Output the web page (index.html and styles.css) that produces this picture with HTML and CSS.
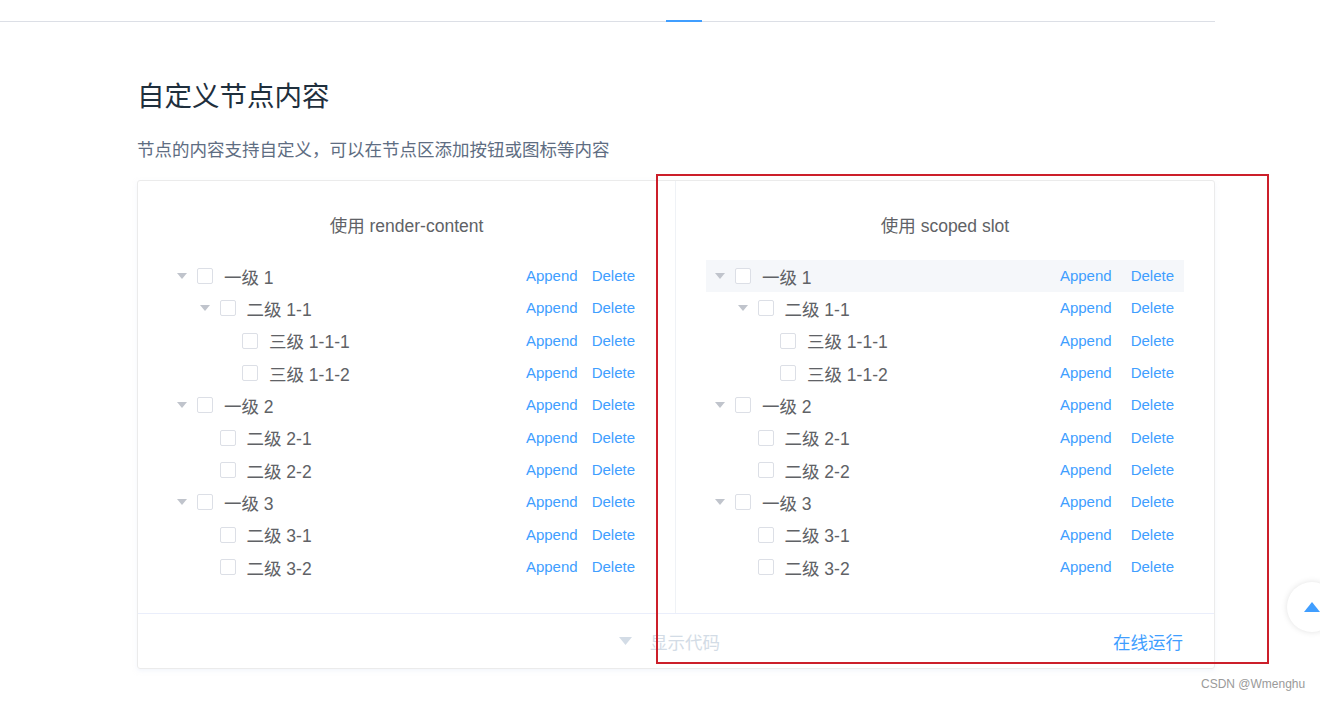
FILE: index.html
```html
<!DOCTYPE html>
<html lang="zh-CN">

<head>
    <meta charset="UTF-8">
    <meta name="viewport" content="width=device-width, initial-scale=1.0">
    <title>Tree 树形控件 - 自定义节点内容</title>
    <link rel="stylesheet" href="styles.css">
</head>

<body>
    <div class="page">
        <nav class="tabs">
            <span class="tab-bar"></span>
        </nav>

        <section class="doc">
            <h3 class="doc-title">自定义节点内容</h3>
            <p class="doc-desc">节点的内容支持自定义，可以在节点区添加按钮或图标等内容</p>

            <div class="demo-block">
                <div class="source">
                    <div class="block">
                        <span class="demonstration">使用 render-content</span>
                        <div class="tree">
                            <div class="node lv1"><span class="caret"><svg width="10" height="6" viewBox="0 0 10 6"><path d="M0 0h10L5 6z"/></svg></span><span class="check"></span><span class="label">一级 1</span><span class="ops"><a>Append</a><a>Delete</a></span></div>
                            <div class="node lv2"><span class="caret"><svg width="10" height="6" viewBox="0 0 10 6"><path d="M0 0h10L5 6z"/></svg></span><span class="check"></span><span class="label">二级 1-1</span><span class="ops"><a>Append</a><a>Delete</a></span></div>
                            <div class="node lv3"><span class="caret leaf"></span><span class="check"></span><span class="label">三级 1-1-1</span><span class="ops"><a>Append</a><a>Delete</a></span></div>
                            <div class="node lv3"><span class="caret leaf"></span><span class="check"></span><span class="label">三级 1-1-2</span><span class="ops"><a>Append</a><a>Delete</a></span></div>
                            <div class="node lv1"><span class="caret"><svg width="10" height="6" viewBox="0 0 10 6"><path d="M0 0h10L5 6z"/></svg></span><span class="check"></span><span class="label">一级 2</span><span class="ops"><a>Append</a><a>Delete</a></span></div>
                            <div class="node lv2"><span class="caret leaf"></span><span class="check"></span><span class="label">二级 2-1</span><span class="ops"><a>Append</a><a>Delete</a></span></div>
                            <div class="node lv2"><span class="caret leaf"></span><span class="check"></span><span class="label">二级 2-2</span><span class="ops"><a>Append</a><a>Delete</a></span></div>
                            <div class="node lv1"><span class="caret"><svg width="10" height="6" viewBox="0 0 10 6"><path d="M0 0h10L5 6z"/></svg></span><span class="check"></span><span class="label">一级 3</span><span class="ops"><a>Append</a><a>Delete</a></span></div>
                            <div class="node lv2"><span class="caret leaf"></span><span class="check"></span><span class="label">二级 3-1</span><span class="ops"><a>Append</a><a>Delete</a></span></div>
                            <div class="node lv2"><span class="caret leaf"></span><span class="check"></span><span class="label">二级 3-2</span><span class="ops"><a>Append</a><a>Delete</a></span></div>
                        </div>
                    </div>

                    <div class="block slot">
                        <span class="demonstration">使用 scoped slot</span>
                        <div class="tree">
                            <div class="node lv1 current"><span class="caret"><svg width="10" height="6" viewBox="0 0 10 6"><path d="M0 0h10L5 6z"/></svg></span><span class="check"></span><span class="label">一级 1</span><span class="ops"><a>Append</a><a>Delete</a></span></div>
                            <div class="node lv2"><span class="caret"><svg width="10" height="6" viewBox="0 0 10 6"><path d="M0 0h10L5 6z"/></svg></span><span class="check"></span><span class="label">二级 1-1</span><span class="ops"><a>Append</a><a>Delete</a></span></div>
                            <div class="node lv3"><span class="caret leaf"></span><span class="check"></span><span class="label">三级 1-1-1</span><span class="ops"><a>Append</a><a>Delete</a></span></div>
                            <div class="node lv3"><span class="caret leaf"></span><span class="check"></span><span class="label">三级 1-1-2</span><span class="ops"><a>Append</a><a>Delete</a></span></div>
                            <div class="node lv1"><span class="caret"><svg width="10" height="6" viewBox="0 0 10 6"><path d="M0 0h10L5 6z"/></svg></span><span class="check"></span><span class="label">一级 2</span><span class="ops"><a>Append</a><a>Delete</a></span></div>
                            <div class="node lv2"><span class="caret leaf"></span><span class="check"></span><span class="label">二级 2-1</span><span class="ops"><a>Append</a><a>Delete</a></span></div>
                            <div class="node lv2"><span class="caret leaf"></span><span class="check"></span><span class="label">二级 2-2</span><span class="ops"><a>Append</a><a>Delete</a></span></div>
                            <div class="node lv1"><span class="caret"><svg width="10" height="6" viewBox="0 0 10 6"><path d="M0 0h10L5 6z"/></svg></span><span class="check"></span><span class="label">一级 3</span><span class="ops"><a>Append</a><a>Delete</a></span></div>
                            <div class="node lv2"><span class="caret leaf"></span><span class="check"></span><span class="label">二级 3-1</span><span class="ops"><a>Append</a><a>Delete</a></span></div>
                            <div class="node lv2"><span class="caret leaf"></span><span class="check"></span><span class="label">二级 3-2</span><span class="ops"><a>Append</a><a>Delete</a></span></div>
                        </div>
                    </div>
                </div>

                <div class="demo-control">
                    <span></span>
                    <span class="toggle">
                        <svg width="13" height="8" viewBox="0 0 13 8"><path d="M0 0h13L6.5 8z"/></svg>
                        <span>显示代码</span>
                    </span>
                    <a class="run">在线运行</a>
                </div>
            </div>
        </section>
    </div>

    <!-- screenshot annotation -->
    <div class="mark"></div>

    <div class="backtop">
        <svg width="16" height="10" viewBox="0 0 16 10"><path d="M8 0l8 10H0z"/></svg>
    </div>

    <div class="watermark">CSDN @Wmenghu</div>
</body>

</html>
```

FILE: styles.css
```css
* {
    margin: 0;
    padding: 0;
    box-sizing: border-box;
}

html,
body {
    overflow: hidden;
}

body {
    font-family: "Liberation Sans", Arial, "Noto Sans CJK SC", sans-serif;
    background: #fff;
    color: #606266;
    height: 701px;
}

.page {
    width: 1215px;
}

/* top tabs */
.tabs {
    height: 22px;
    border-bottom: 1px solid #dcdfe6;
    display: flex;
    align-items: flex-end;
}

.tab-bar {
    width: 36px;
    height: 2px;
    margin-left: 666px;
    margin-bottom: -1px;
    background: #409eff;
}

/* doc section */
.doc {
    padding-left: 137px;
}

.doc-title {
    margin-top: 55px;
    font-size: 27.5px;
    font-weight: 400;
    line-height: 40px;
    color: #1f2f3d;
}

.doc-desc {
    margin-top: 20px;
    margin-bottom: 17px;
    font-size: 17.5px;
    line-height: 26px;
    color: #5e6d82;
}

.demo-block {
    border: 1px solid #ebebeb;
    border-radius: 3px;
    box-shadow: 0 2px 4px 0 rgba(232, 237, 250, 0.5);
}

.source {
    display: grid;
    grid-template-columns: 1fr 1fr;
    height: 432px;
}

.block {
    padding: 30px 30px;
    text-align: center;
}

.block:first-child {
    border-right: 1px solid #eff2f6;
}

.demonstration {
    display: block;
    font-size: 17.5px;
    line-height: 30px;
    margin-bottom: 19px;
    color: #606266;
}

/* tree */
.tree {
    text-align: left;
}

.node {
    display: flex;
    align-items: center;
    height: 32.33px;
    padding-right: 10px;
}

.node.current {
    background: #f5f7fa;
}

.lv2 {
    padding-left: 22.5px;
}

.lv3 {
    padding-left: 45px;
}

.caret {
    width: 29px;
    padding-left: 9px;
    display: flex;
    fill: #c0c4cc;
}

.check {
    width: 16px;
    height: 16px;
    border: 1px solid #dcdfe6;
    border-radius: 2px;
    margin-right: 11px;
    background: #fff;
}

.label {
    flex: 1;
    font-size: 17.5px;
    color: #606266;
}

.ops a {
    font-size: 15px;
    color: #409eff;
    margin-left: 14px;
    cursor: pointer;
}

.slot .ops a {
    margin-left: 19px;
}

/* footer control */
.demo-control {
    height: 55px;
    border-top: 1px solid #eaeefb;
    display: grid;
    grid-template-columns: 1fr auto 1fr;
    align-items: center;
    padding-right: 31px;
}

.toggle {
    display: flex;
    align-items: center;
    gap: 18px;
    margin-left: 18px;
    font-size: 17.5px;
    color: #d3dce6;
    fill: #d3dce6;
}

.run {
    justify-self: end;
    font-size: 17.5px;
    color: #409eff;
    cursor: pointer;
}

/* overlays */
.mark {
    position: absolute;
    left: 656px;
    top: 174px;
    width: 613px;
    height: 490px;
    border: 2px solid #cc1f2a;
    pointer-events: none;
}

.backtop {
    position: fixed;
    left: 1287px;
    top: 582px;
    width: 50px;
    height: 50px;
    border-radius: 50%;
    background: #fff;
    box-shadow: 0 0 6px rgba(0, 0, 0, 0.12);
    display: flex;
    align-items: center;
    justify-content: center;
    fill: #409eff;
}

.watermark {
    position: absolute;
    left: 1201px;
    top: 677px;
    font-size: 12px;
    color: #9a9a9a;
}
```
